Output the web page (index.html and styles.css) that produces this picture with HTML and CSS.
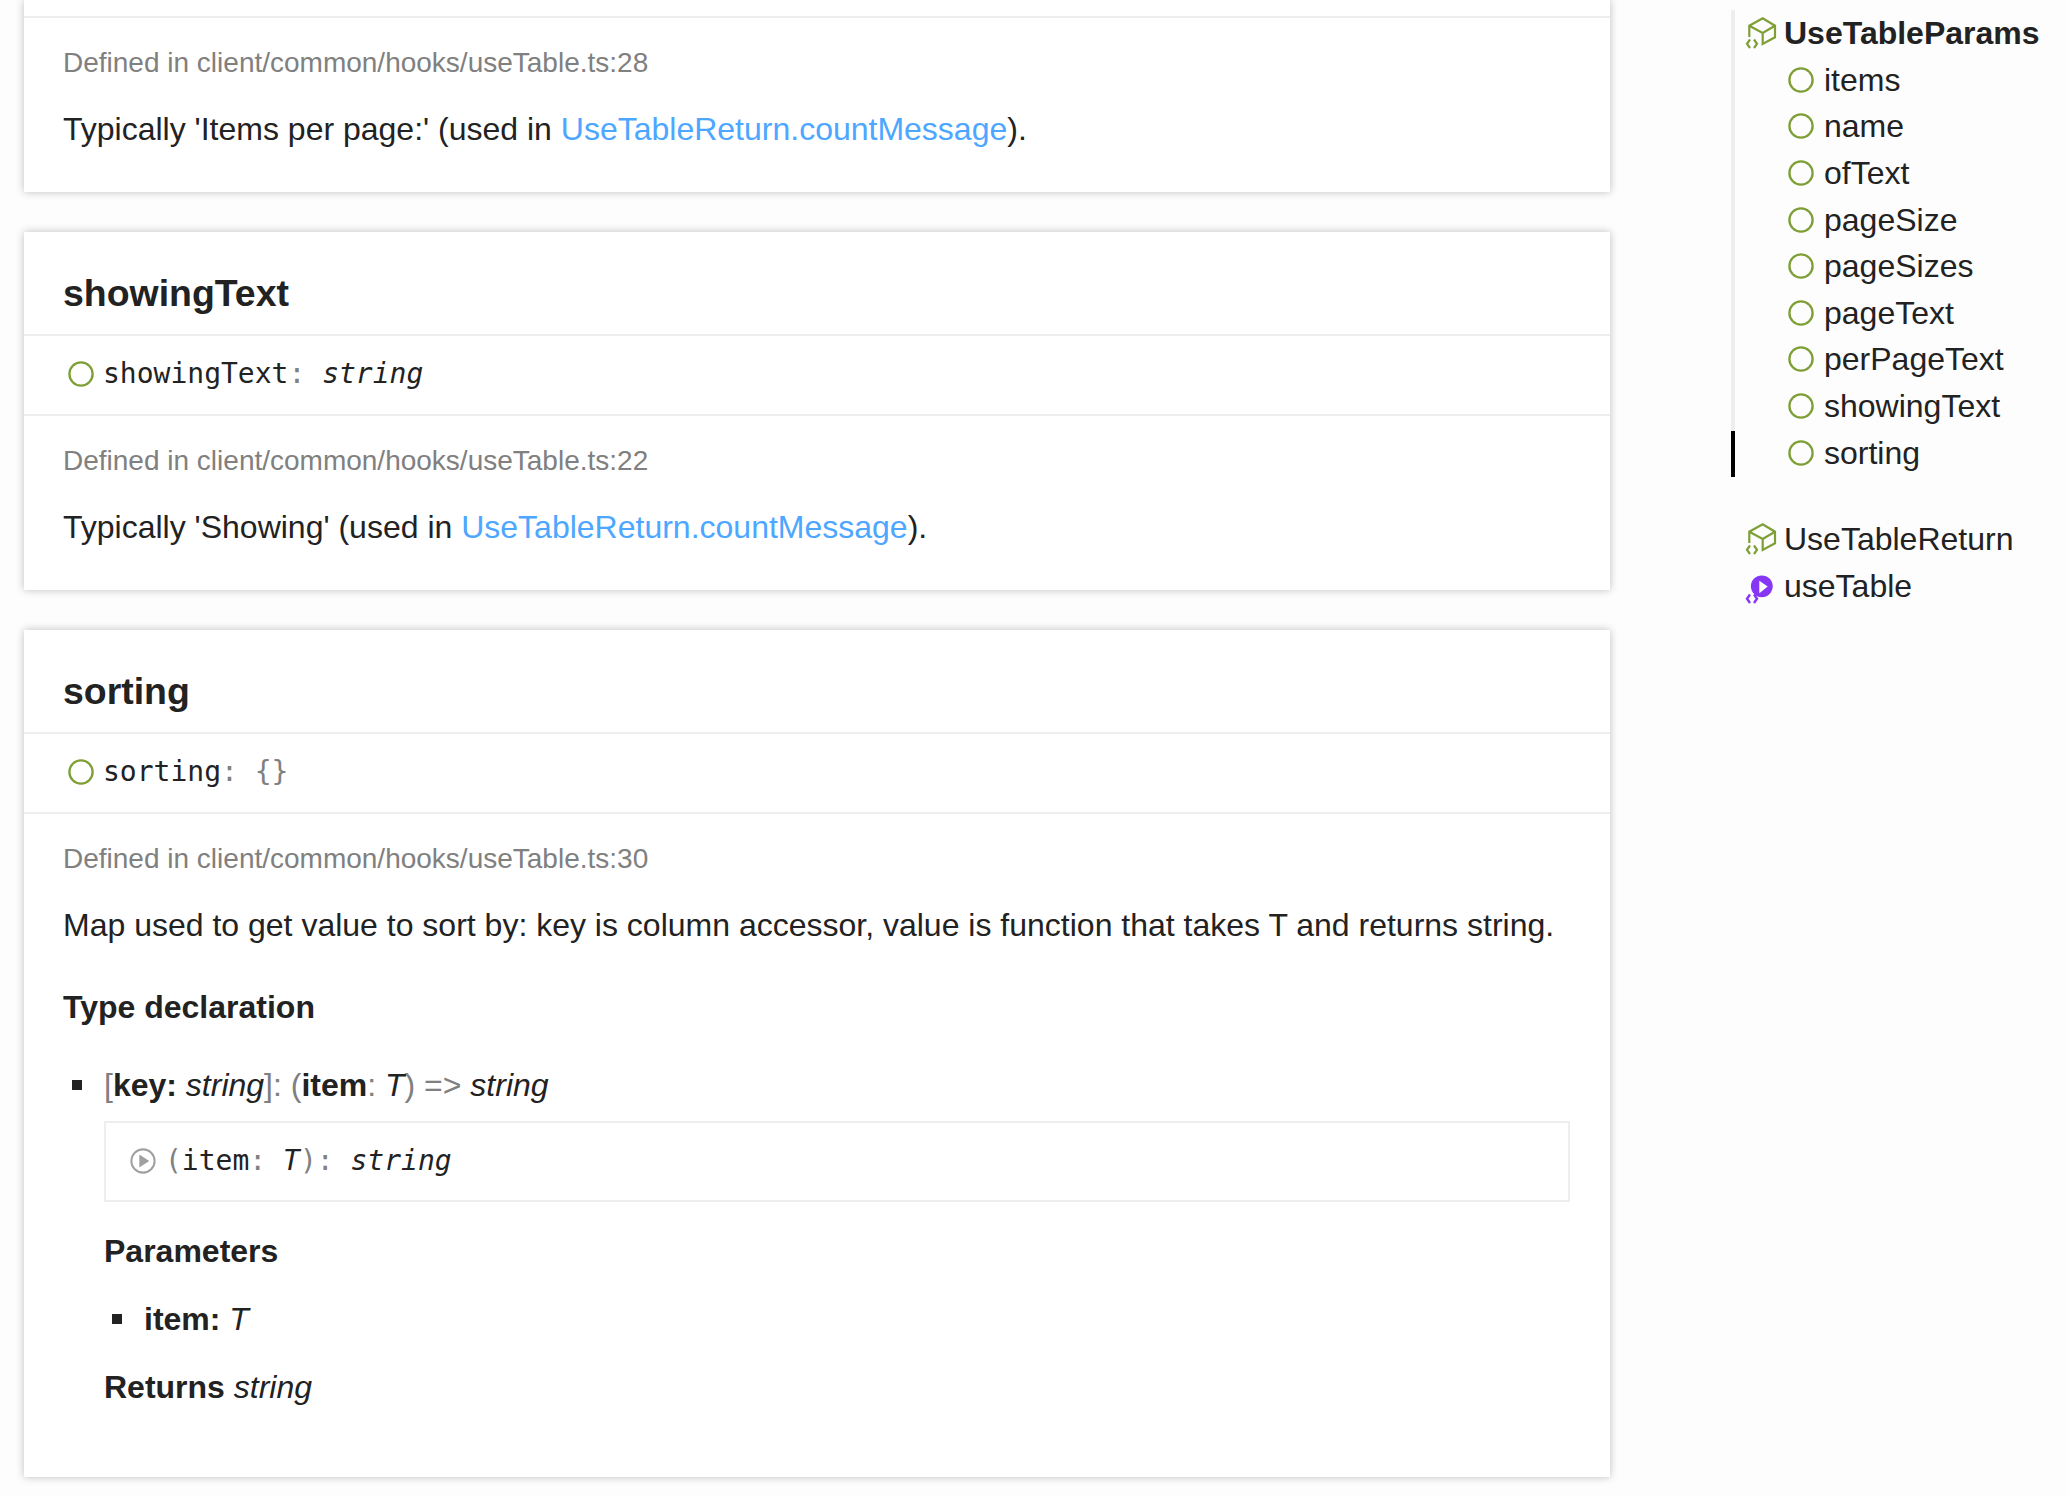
FILE: index.html
```html
<!DOCTYPE html>
<html lang="en">
<head>
<meta charset="utf-8">
<title>UseTableParams</title>
<link rel="stylesheet" href="styles.css">
</head>
<body>
<div class="layout">
<main class="content">
  <section class="card card-first">
    <div class="cut"></div>
    <div class="body">
      <p class="source">Defined in client/common/hooks/useTable.ts:28</p>
      <p class="text">Typically 'Items per page:' (used in <a href="#">UseTableReturn.countMessage</a>).</p>
    </div>
  </section>
  <section class="card">
    <h3 class="title">showingText</h3>
    <div class="sig"><svg class="ring" viewBox="0 0 28 28"><circle cx="14" cy="14" r="12.5"/></svg><span>showingText<span class="dim">:</span> <em>string</em></span></div>
    <div class="body">
      <p class="source">Defined in client/common/hooks/useTable.ts:22</p>
      <p class="text">Typically 'Showing' (used in <a href="#">UseTableReturn.countMessage</a>).</p>
    </div>
  </section>
  <section class="card card-last">
    <h3 class="title">sorting</h3>
    <div class="sig"><svg class="ring" viewBox="0 0 28 28"><circle cx="14" cy="14" r="12.5"/></svg><span>sorting<span class="dim">: {}</span></span></div>
    <div class="body">
      <p class="source">Defined in client/common/hooks/useTable.ts:30</p>
      <p class="text">Map used to get value to sort by: key is column accessor, value is function that takes T and returns string.</p>
      <h4 class="sub">Type declaration</h4>
      <ul class="list list-outer">
        <li><span class="dim">[</span><b>key:</b> <em>string</em><span class="dim">]: (</span><b>item</b><span class="dim">:</span> <em>T</em><span class="dim">) =&gt;</span> <em>string</em>
          <div class="inner-sig"><svg class="play" viewBox="0 0 28 28"><circle cx="14" cy="14" r="12.5"/><path d="M10 7 20.800 14 10 21z"/></svg><span><span class="dim">(</span>item<span class="dim">:</span> <em>T</em><span class="dim">):</span> <em>string</em></span></div>
          <h4 class="sub sub-param">Parameters</h4>
          <ul class="list"><li><b>item:</b> <em>T</em></li></ul>
          <p class="returns"><b>Returns</b> <em>string</em></p>
        </li>
      </ul>
    </div>
  </section>
</main>
<nav class="toc">
  <div class="rail">
    <div class="nav-row top current"><svg class="kind" viewBox="0 0 32 32"><path class="cube" d="M3.300 20V8.700L16.700 1.300 29 8.700V20.300L16.700 27V16M3.300 8.700 16.700 16 29 8.700"/><path class="code" d="M4 22.500 1 26.800 4 31M8 22.500 11 26.800 8 31"/></svg><span>UseTableParams</span></div>
    <div class="nav-row sub-row"><svg class="ring" viewBox="0 0 28 28"><circle cx="14" cy="14" r="12.500"/></svg><span>items</span></div>
    <div class="nav-row sub-row"><svg class="ring" viewBox="0 0 28 28"><circle cx="14" cy="14" r="12.500"/></svg><span>name</span></div>
    <div class="nav-row sub-row"><svg class="ring" viewBox="0 0 28 28"><circle cx="14" cy="14" r="12.500"/></svg><span>ofText</span></div>
    <div class="nav-row sub-row"><svg class="ring" viewBox="0 0 28 28"><circle cx="14" cy="14" r="12.500"/></svg><span>pageSize</span></div>
    <div class="nav-row sub-row"><svg class="ring" viewBox="0 0 28 28"><circle cx="14" cy="14" r="12.500"/></svg><span>pageSizes</span></div>
    <div class="nav-row sub-row"><svg class="ring" viewBox="0 0 28 28"><circle cx="14" cy="14" r="12.500"/></svg><span>pageText</span></div>
    <div class="nav-row sub-row"><svg class="ring" viewBox="0 0 28 28"><circle cx="14" cy="14" r="12.500"/></svg><span>perPageText</span></div>
    <div class="nav-row sub-row"><svg class="ring" viewBox="0 0 28 28"><circle cx="14" cy="14" r="12.500"/></svg><span>showingText</span></div>
    <div class="nav-row sub-row active"><svg class="ring" viewBox="0 0 28 28"><circle cx="14" cy="14" r="12.500"/></svg><span>sorting</span></div>
  </div>
  <div class="after">
    <div class="nav-row top"><svg class="kind" viewBox="0 0 32 32"><path class="cube" d="M3.300 20V8.700L16.700 1.300 29 8.700V20.300L16.700 27V16M3.300 8.700 16.700 16 29 8.700"/><path class="code" d="M4 22.500 1 26.800 4 31M8 22.500 11 26.800 8 31"/></svg><span>UseTableReturn</span></div>
    <div class="nav-row top"><svg class="kind" viewBox="0 0 32 32"><circle class="fn" cx="15.800" cy="16.300" r="10.900"/><path class="tri" d="M13.300 10.700 21.700 16.500 13.300 23.300z"/><path class="code-fn" d="M4 24.500 1 28.800 4 33M8 24.500 11 28.800 8 33"/></svg><span>useTable</span></div>
  </div>
</nav>
</div>
</body>
</html>
```
FILE: styles.css
```css
* { box-sizing: border-box; }
html, body { margin: 0; height: 1496px; overflow: hidden; }
body {
  background: #fdfdfd;
  color: #222;
  font-family: "Liberation Sans", Arial, sans-serif;
  font-size: 32px;
  line-height: 44px;
}
.layout { display: flex; align-items: flex-start; }
.content { width: 1586px; margin-left: 24px; flex: none; }
.card {
  background: #fff;
  box-shadow: 0 0 8px rgba(0,0,0,.25);
  margin-bottom: 40px;
}
.cut { height: 18px; border-bottom: 2px solid #eee; }
.title {
  margin: 0;
  padding: 39px 39px 0;
  height: 104px;
  font-size: 37.440px;
  line-height: 44px;
  font-weight: 700;
  color: #222;
  border-bottom: 2px solid #eee;
}
.sig {
  display: flex;
  align-items: center;
  gap: 9px;
  height: 80px;
  padding: 0 40px 2px 44px;
  border-bottom: 2px solid #eee;
  font-family: "DejaVu Sans Mono", monospace;
  font-size: 28px;
  line-height: 40px;
  white-space: pre;
}
.ring, .play { width: 26px; height: 26px; flex: none; fill: none; }
.ring circle { stroke: #7e9f35; stroke-width: 2.500; }
.dim { color: #808080; }
.body { padding: 25px 40px 21px 39px; }
.source { margin: 0 0 24px; font-size: 28px; line-height: 40px; color: #808080; }
.text { margin: 0 0 20px; line-height: 44px; }
.text a { color: #4da6ff; text-decoration: none; }
.sub { margin: 38px 0 34px; font-size: 32px; line-height: 44px; font-weight: 700; }
.list { margin: 0; padding: 0 0 0 40px; list-style: none; }
.list-outer { padding-left: 41px; }
.list > li { position: relative; }
.list > li::before {
  content: "";
  position: absolute;
  left: -32px;
  top: 17px;
  width: 10px;
  height: 10px;
  background: #222;
}
.inner-sig {
  display: flex;
  align-items: center;
  gap: 9px;
  height: 81px;
  margin-top: 14px;
  padding: 0 24px 2px;
  background: #fff;
  border: 2px solid #eee;
  font-family: "DejaVu Sans Mono", monospace;
  font-size: 28px;
  white-space: pre;
}
.play circle { stroke: #a0a0a0; stroke-width: 2.200; fill: none; }
.play path { fill: #a0a0a0; }
.sub-param { margin: 27px 0 24px; }
.returns { margin: 24px 0 0; padding-bottom: 47px; }
.toc { width: 337px; margin-left: 121px; flex: none; padding-top: 12px; font-size: 32px; color: #222; }
.rail { border-left: 4px solid #eee; }
.nav-row { display: flex; align-items: center; height: 46.600px; white-space: nowrap; }
.nav-row.top { gap: 6px; padding-left: 11px; }
.current { margin-top: -2px; font-weight: 700; }
.after { margin-top: 40px; padding-left: 4px; }
.sub-row { padding-left: 53px; gap: 10px; position: relative; }
.active::before { content: ""; position: absolute; left: -4px; top: 2px; bottom: -1px; width: 4px; background: #000; }
.kind { width: 32px; height: 32px; flex: none; fill: none; overflow: visible; }
.cube, .code { stroke: #7e9f35; stroke-width: 2.200; fill: none; }
.fn { fill: #8637f5; }
.tri { fill: #fff; }
.code-fn { stroke: #8637f5; stroke-width: 2.400; fill: none; }
```
